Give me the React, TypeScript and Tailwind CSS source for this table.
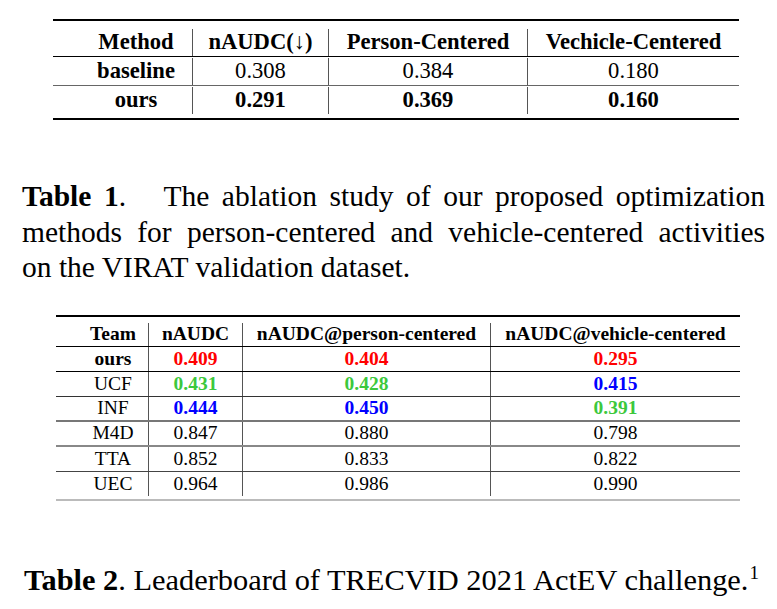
import React from "react";

const serif = { fontFamily: '"Liberation Serif", "Times New Roman", serif' };

type Cell = { t: string; b?: boolean; c?: string };

function T1Row({ cells, h, bottom }: { cells: Cell[]; h: string; bottom?: string }) {
  return (
    <div className={`grid grid-cols-[139px_136px_199px_212px] ${h} ${bottom ?? ""}`}>
      {cells.map((c, i) => (
        <div
          key={i}
          className={`flex items-center justify-center ${i === 0 ? "pl-[27px]" : "border-l border-[#555]"} ${c.b ? "font-bold" : ""}`}
        >
          {c.t}
        </div>
      ))}
    </div>
  );
}

function T2Row({ cells, h, bottom }: { cells: Cell[]; h: string; bottom?: string }) {
  return (
    <div className={`grid grid-cols-[92px_94px_248px_250px] ${h} ${bottom ?? ""}`}>
      {cells.map((c, i) => (
        <div
          key={i}
          className={`flex items-center justify-center ${i === 0 ? "pl-[22px]" : "border-l border-[#555]"} ${c.b ? "font-bold" : ""} ${c.c ?? ""}`}
        >
          {c.t}
        </div>
      ))}
    </div>
  );
}

const R = "text-[#ff0000]";
const G = "text-[#3cc83c]";
const B = "text-[#0000ff]";

export default function App() {
  return (
    <div className="w-[777px] h-[609px] bg-white text-black overflow-hidden" style={serif}>
      {/* Table 1 */}
      <div className="pt-[19px] pl-[53px]">
        <div className="w-[686px] text-[22.6px] leading-none">
          <div className="h-[2px] bg-black" />
          <div className="h-[7px]" />
          <T1Row
            h="h-[29px] pt-[1px]"
            bottom="border-b border-black"
            cells={[
              { t: "Method", b: true },
              { t: "nAUDC(↓)", b: true },
              { t: "Person-Centered", b: true },
              { t: "Vechicle-Centered", b: true },
            ]}
          />
          <T1Row
            h="h-[29px] pt-[1px]"
            bottom="border-b border-[#666]"
            cells={[
              { t: "baseline", b: true },
              { t: "0.308" },
              { t: "0.384" },
              { t: "0.180" },
            ]}
          />
          <T1Row
            h="h-[28px] pt-[1px]"
            cells={[
              { t: "ours", b: true },
              { t: "0.291", b: true },
              { t: "0.369", b: true },
              { t: "0.160", b: true },
            ]}
          />
          <div className="h-[4px]" />
          <div className="h-[2px] bg-black" />
        </div>
      </div>

      {/* Caption 1 */}
      <div className="pt-[59px] pl-[22px]">
        <div className="w-[743px] text-[29.5px] leading-[35.5px]">
          <p className="text-justify [text-align-last:justify]">
            <b>Table 1</b>.&nbsp;&nbsp; The ablation study of our proposed optimization
          </p>
          <p className="text-justify [text-align-last:justify]">
            methods for person-centered and vehicle-centered activities
          </p>
          <p>on the VIRAT validation dataset.</p>
        </div>
      </div>

      {/* Table 2 */}
      <div className="pt-[29px] pl-[56px]">
        <div className="w-[684px] text-[19.5px] leading-none">
          <div className="h-[2px] bg-black" />
          <div className="h-[6px]" />
          <T2Row
            h="h-[24px]"
            bottom="border-b border-black"
            cells={[
              { t: "Team", b: true },
              { t: "nAUDC", b: true },
              { t: "nAUDC@person-centered", b: true },
              { t: "nAUDC@vehicle-centered", b: true },
            ]}
          />
          <T2Row
            h="h-[25px]"
            bottom="border-b border-black"
            cells={[
              { t: "ours", b: true },
              { t: "0.409", b: true, c: R },
              { t: "0.404", b: true, c: R },
              { t: "0.295", b: true, c: R },
            ]}
          />
          <T2Row
            h="h-[25px]"
            bottom="border-b border-[#333]"
            cells={[
              { t: "UCF" },
              { t: "0.431", b: true, c: G },
              { t: "0.428", b: true, c: G },
              { t: "0.415", b: true, c: B },
            ]}
          />
          <T2Row
            h="h-[25px]"
            bottom="border-b-2 border-[#777]"
            cells={[
              { t: "INF" },
              { t: "0.444", b: true, c: B },
              { t: "0.450", b: true, c: B },
              { t: "0.391", b: true, c: G },
            ]}
          />
          <T2Row
            h="h-[25px]"
            bottom="border-b-2 border-[#888]"
            cells={[{ t: "M4D" }, { t: "0.847" }, { t: "0.880" }, { t: "0.798" }]}
          />
          <T2Row
            h="h-[25px]"
            bottom="border-b border-[#444]"
            cells={[{ t: "TTA" }, { t: "0.852" }, { t: "0.833" }, { t: "0.822" }]}
          />
          <T2Row
            h="h-[24px]"
            cells={[{ t: "UEC" }, { t: "0.964" }, { t: "0.986" }, { t: "0.990" }]}
          />
          <div className="h-[3px]" />
          <div className="h-[2px] bg-[#bbb]" />
        </div>
      </div>

      {/* Caption 2 */}
      <div className="pt-[61px] pl-[24px]">
        <p className="text-[30.4px] leading-[36px] whitespace-nowrap">
          <b>Table 2</b>. Leaderboard of TRECVID 2021 ActEV challenge.
          <sup className="text-[19px] relative top-[-11px] ml-[1px]">1</sup>
        </p>
      </div>
    </div>
  );
}
